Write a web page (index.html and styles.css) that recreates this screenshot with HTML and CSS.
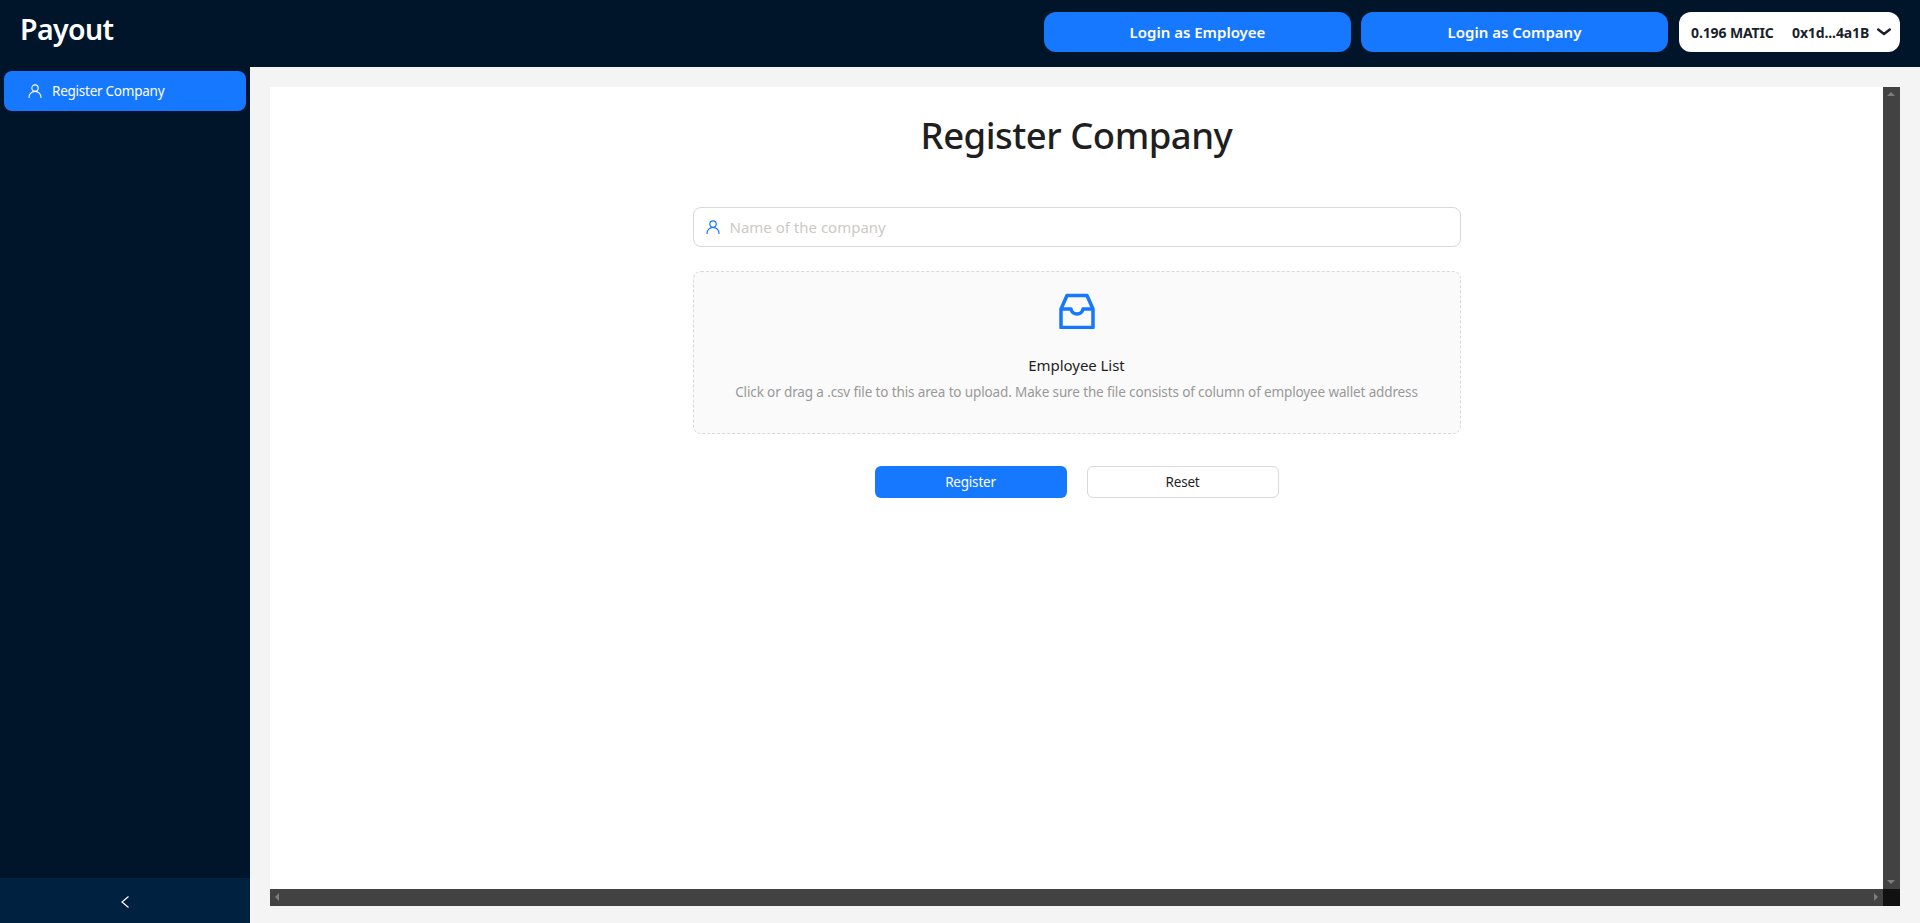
FILE: index.html
```html
<!DOCTYPE html>
<html lang="en">
<head>
<meta charset="utf-8">
<title>Payout</title>
<link rel="stylesheet" href="styles.css">
</head>
<body>
<header class="topbar">
  <div class="logo">Payout</div>
  <div class="actions">
    <button class="btn-login">Login as Employee</button>
    <button class="btn-login">Login as Company</button>
    <div class="wallet">
      <span class="balance">0.196 MATIC</span>
      <span class="address">0x1d...4a1B</span>
      <svg class="chev" viewBox="0 0 14 8" width="14" height="8"><path d="M1.200 1.500 7 6 12.800 1.500" fill="none" stroke="#1a1f2b" stroke-width="2.400" stroke-linecap="round" stroke-linejoin="round"/></svg>
    </div>
  </div>
</header>
<div class="layout">
  <aside class="sider">
    <nav class="menu">
      <a class="menu-item">
        <svg class="user-ico" viewBox="0 0 14 14" width="14" height="14"><circle cx="7" cy="4.100" r="3.200" fill="none" stroke="currentColor" stroke-width="1.100"/><path d="M1 13.400C1 10 3.600 7.400 7 7.400S13 10 13 13.400" fill="none" stroke="currentColor" stroke-width="1.100" stroke-linecap="round"/></svg>
        <span>Register Company</span>
      </a>
    </nav>
    <div class="trigger">
      <svg viewBox="0 0 10 14" width="10" height="14"><path d="M8.500 1.500 2 7l6.500 5.500" fill="none" stroke="#fff" stroke-width="1.200"/></svg>
    </div>
  </aside>
  <main class="main">
    <div class="frame">
      <section class="content">
        <h1 class="title">Register Company</h1>
        <form class="form">
          <div class="input">
            <svg class="user-ico field-ico" viewBox="0 0 14 14" width="14" height="14"><circle cx="7" cy="4.100" r="3.200" fill="none" stroke="currentColor" stroke-width="1.200"/><path d="M1 13.400C1 10 3.600 7.400 7 7.400S13 10 13 13.400" fill="none" stroke="currentColor" stroke-width="1.200" stroke-linecap="round"/></svg>
            <span class="placeholder">Name of the company</span>
          </div>
          <div class="dragger">
            <svg class="inbox" viewBox="0 0 36 36" width="36" height="36"><path d="M2 16 8 2.500H28L34 16V34.500H2Z M2 16H12C12.500 19 15 21 18 21S23.500 19 24 16H34" fill="none" stroke="#1677ff" stroke-width="3.500" stroke-linejoin="round"/></svg>
            <p class="drag-title">Employee List</p>
            <p class="drag-hint">Click or drag a .csv file to this area to upload. Make sure the file consists of column of employee wallet address</p>
          </div>
          <div class="form-actions">
            <button type="button" class="btn btn-primary">Register</button>
            <button type="button" class="btn btn-default">Reset</button>
          </div>
        </form>
      </section>
      <div class="vbar"><i class="tri tri-up"></i><i class="tri tri-down"></i></div>
      <div class="hbar"><i class="tri tri-left"></i><i class="tri tri-right"></i></div>
      <div class="corner"></div>
    </div>
  </main>
</div>
</body>
</html>
```
FILE: styles.css
```css
* { box-sizing: border-box; }
html, body { height: 100%; }
body {
  margin: 0;
  display: flex;
  flex-direction: column;
  overflow: hidden;
  font-family: "Noto Sans", "Open Sans", sans-serif;
  background: #f4f4f4;
  color: #1f1f1f;
}
button { font-family: inherit; cursor: pointer; }
p { margin: 0; }

.topbar {
  height: 67px;
  flex: none;
  background: #001529;
  display: flex;
  align-items: flex-start;
  justify-content: space-between;
  padding: 12px 20px 0;
}
.logo { color: #fff; font-size: 28.500px; font-weight: 600; line-height: 29px; letter-spacing: -0.6px; margin-top: 3px; }
.actions { display: flex; gap: 10px; align-items: center; }
.btn-login {
  width: 307px;
  height: 40px;
  background: #1677ff;
  color: #fff;
  border: 0;
  border-radius: 12px;
  font-size: 15px;
  font-weight: 600;
  letter-spacing: 0;
}
.wallet {
  width: 221px;
  height: 40px;
  margin-left: 1px;
  background: #fff;
  border-radius: 12px;
  display: flex;
  align-items: center;
  padding: 0 9px 0 12px;
  font-size: 14px;
  font-weight: 700;
  letter-spacing: -0.12px;
  color: #1a1f2b;
}
.balance { width: 101px; white-space: nowrap; }
.address { flex: 1; white-space: nowrap; }
.chev { flex: none; }

.layout { flex: 1; display: flex; min-height: 0; }
.sider {
  width: 250px;
  flex: none;
  background: #001529;
  display: flex;
  flex-direction: column;
}
.menu { flex: 1; padding: 4px; }
.menu-item {
  height: 40px;
  background: #1677ff;
  color: #fff;
  border-radius: 8px;
  display: flex;
  align-items: center;
  gap: 10px;
  padding-left: 24px;
  font-size: 13.500px;
  letter-spacing: -0.25px;
}
.trigger {
  height: 45px;
  padding-top: 2px;
  background: #002140;
  display: flex;
  align-items: center;
  justify-content: center;
}
.main { flex: 1; min-width: 0; padding: 20px 20px 17px; }
.frame {
  height: 100%;
  display: grid;
  grid-template-columns: 1fr 17px;
  grid-template-rows: 1fr 17px;
}
.content { background: #fff; min-width: 0; padding: 20px 0 0; }
.title {
  margin: 0;
  text-align: center;
  font-size: 36.500px;
  font-weight: 500;
  line-height: 56px;
  letter-spacing: -0.5px;
  color: #1f1f1f;
}
.form {
  width: 768px;
  margin: 44px auto 0;
  display: flex;
  flex-direction: column;
}
.input {
  height: 40px;
  border: 1px solid #d9d9d9;
  border-radius: 8px;
  display: flex;
  align-items: center;
  gap: 10px;
  padding-left: 12px;
  font-size: 15px;
  letter-spacing: 0;
}
.field-ico { color: #1677ff; }
.placeholder { color: #cdc9c5; }
.dragger {
  margin-top: 24px;
  height: 163px;
  border: 1px dashed #d9d9d9;
  border-radius: 8px;
  background: #fafafa;
  display: flex;
  flex-direction: column;
  align-items: center;
}
.inbox { margin-top: 21px; }
.drag-title { margin-top: 24px; font-size: 15px; line-height: 24px; letter-spacing: -0.05px; color: #1f1f1f; }
.drag-hint { margin-top: 4px; font-size: 13.500px; line-height: 22px; letter-spacing: -0.13px; color: #999; white-space: nowrap; }
.form-actions { margin-top: 32px; display: flex; justify-content: center; gap: 20px; }
.btn {
  width: 192px;
  height: 32px;
  border-radius: 6px;
  font-size: 13.500px;
  letter-spacing: -0.2px;
}
.btn-primary { background: #1677ff; color: #fff; border: 0; }
.btn-default { background: #fff; color: #1f1f1f; border: 1px solid #d9d9d9; }

.vbar, .hbar { background: #424242; position: relative; }
.corner { background: #111; }
.tri { position: absolute; width: 0; height: 0; border: 4px solid transparent; }
.tri-up { top: 5px; left: 4px; border-bottom-color: #7d7d7d; border-top-width: 0; }
.tri-down { bottom: 5px; left: 4px; border-top-color: #7d7d7d; border-bottom-width: 0; }
.tri-left { left: 5px; top: 4px; border-right-color: #7d7d7d; border-left-width: 0; }
.tri-right { right: 5px; top: 4px; border-left-color: #7d7d7d; border-right-width: 0; }
```
